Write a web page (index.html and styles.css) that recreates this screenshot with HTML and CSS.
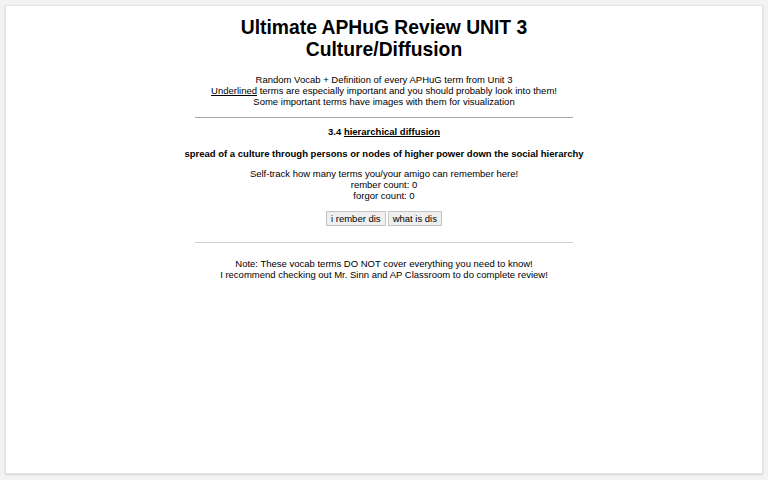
FILE: index.html
```html
<!DOCTYPE html>
<html>
<head>
<meta charset="utf-8">
<link rel="stylesheet" href="styles.css">
</head>
<body>
<div class="card">
  <h1 class="title">Ultimate APHuG Review UNIT 3<br>Culture/Diffusion</h1>
  <p class="intro">Random Vocab + Definition of every APHuG term from Unit 3<br><u>Underlined</u> terms are especially important and you should probably look into them!<br>Some important terms have images with them for visualization</p>
  <hr class="rule">
  <p class="term"><b>3.4 <u>hierarchical diffusion</u></b></p>
  <p class="def">spread of a culture through persons or nodes of higher power down the social hierarchy</p>
  <p class="track">Self-track how many terms you/your amigo can remember here!<br>rember count: 0<br>forgor count: 0</p>
  <div class="buttons"><button class="btn">i rember dis</button><button class="btn">what is dis</button></div>
  <hr class="rule rule-light">
  <p class="note">Note: These vocab terms DO NOT cover everything you need to know!<br>I recommend checking out Mr. Sinn and AP Classroom to do complete review!</p>
</div>
</body>
</html>
```
FILE: styles.css
```css
html, body {
  margin: 0;
  padding: 0;
}
body {
  background: #f3f3f3;
  padding: 5px;
  font-family: "Liberation Sans", Arial, sans-serif;
  color: #000;
  height: 480px;
  box-sizing: border-box;
}
.card {
  background: #fff;
  border: 1px solid #e2e2e2;
  box-shadow: 0 1px 2px rgba(0,0,0,0.12);
  height: 469px;
  box-sizing: border-box;
  text-align: center;
  padding-top: 11px;
}
.title {
  font-size: 19.3px;
  line-height: 22px;
  margin: 0 0 13px;
  font-weight: bold;
}
.intro, .term, .def, .track, .note {
  font-size: 9.5px;
  line-height: 11px;
  margin: 0;
}
.intro {
  margin-bottom: 10px;
}
.rule {
  width: 50%;
  margin: 0 auto;
  border: 0;
  border-top: 1px solid #aaa;
  height: 0;
}
.term {
  margin-top: 8px;
}
.def {
  font-weight: bold;
  margin-top: 11px;
}
.track {
  margin-top: 9px;
}
.buttons {
  margin-top: 10px;
  display: flex;
  justify-content: center;
  gap: 2px;
}
.btn {
  font-family: "Liberation Sans", Arial, sans-serif;
  font-size: 9.5px;
  line-height: 11px;
  padding: 1px 4px;
  background: #efefef;
  border: 1px solid #c4c4c4;
  border-radius: 0;
  color: #000;
}
.rule-light {
  margin-top: 16px;
  border-top-color: #d0d0d0;
}
.note {
  margin-top: 15px;
}
```
